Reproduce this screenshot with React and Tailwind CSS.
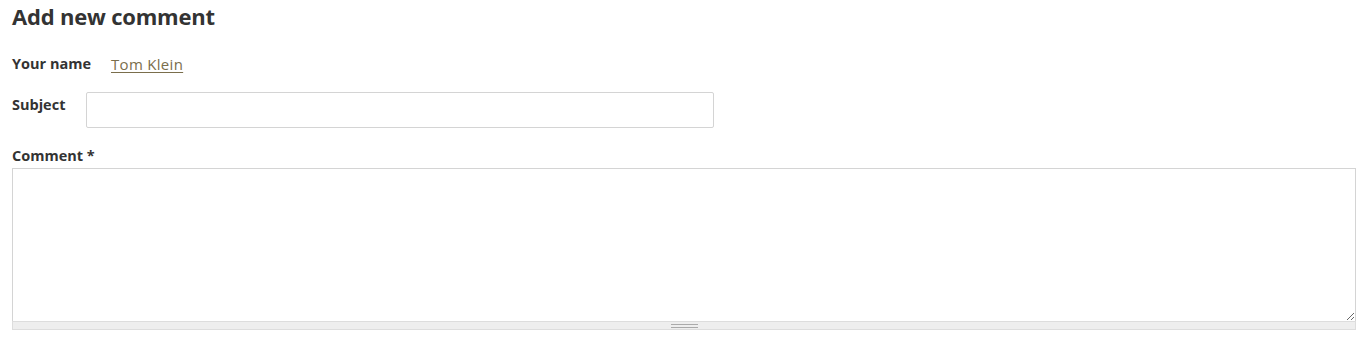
import React from 'react';

const font = { fontFamily: '"Open Sans", "Noto Sans", sans-serif' };

export default function App() {
    return (
        <div className="bg-white w-[1365px] h-[337px] px-3 text-[#333]" style={font}>
            <h2 className="text-[22px] font-bold leading-[32px] pt-0 tracking-[-0.2px]">Add new comment</h2>
            <div className="flex items-center mt-[18px] h-[28px] text-[14.5px]">
                <span className="font-bold w-[99px]">Your name</span>
                <a href="#" className="text-[#7a6e4c] underline underline-offset-2 text-[15px] tracking-[0.3px]">Tom Klein</a>
            </div>
            <div className="flex items-start mt-[14px] text-[14.5px]">
                <label className="font-bold w-[74px] pt-[2px]">Subject</label>
                <input type="text" className="w-[628px] h-[36px] border border-[#d4d4d4] rounded-[2px] outline-none" />
            </div>
            <div className="mt-[18px] text-[14.5px]">
                <label className="font-bold block leading-[20px] mb-[2px]">Comment *</label>
                <textarea className="block w-[1344px] h-[153px] border border-[#d4d4d4] border-b-0 resize-y outline-none" />
                <div className="w-[1344px] h-[9px] bg-[#eeeeee] border border-[#dddddd] flex items-center justify-center">
                    <div className="w-[27px] h-[4px] border-y border-[#aaaaaa]" />
                </div>
            </div>
        </div>
    );
}
